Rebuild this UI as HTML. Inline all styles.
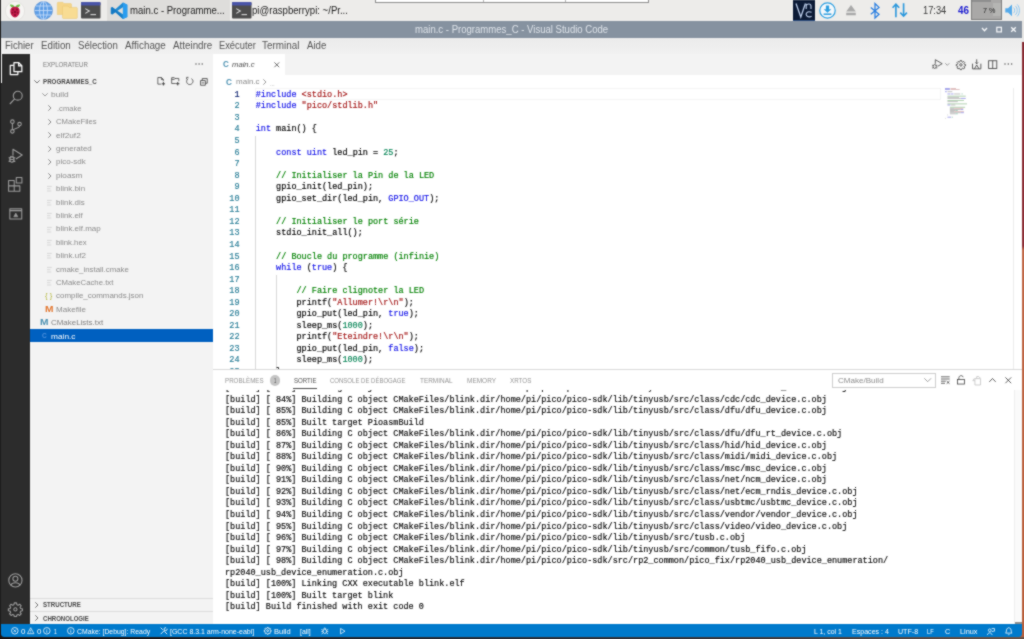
<!DOCTYPE html>
<html lang="fr">
<head>
<meta charset="utf-8">
<title>main.c - Programmes_C - Visual Studio Code</title>
<style>
*{box-sizing:border-box;margin:0;padding:0}
html,body{width:1024px;height:639px;overflow:hidden;background:#1a1210}
body{font-family:"Liberation Sans",sans-serif;position:relative}
#root{position:absolute;left:-4px;top:-4px;width:1032px;height:647px;overflow:hidden;will-change:transform;filter:url(#soft);
  background:linear-gradient(#7a2228 0,#8c3038 64px,#8e323a 250px,#c16a4a 254px,#b9603c 647px)}
#in{position:absolute;left:4px;top:4px;width:1024px;height:639px}
.a{position:absolute}
.l{position:absolute;white-space:pre;line-height:1;transform-origin:0 50%}
svg{position:absolute;overflow:visible}
.code{position:absolute;font-family:"Liberation Mono",monospace;white-space:pre;-webkit-text-stroke:0.16px}
.k{color:#1010e8}.s{color:#a31515}.c{color:#008000}.n{color:#098658}.p{color:#af00db}.m{color:#0000ff}.e{color:#ee0000}
</style>
</head>
<body>
<svg width="0" height="0" style="position:absolute"><filter id="soft" x="0" y="0" width="100%" height="100%" color-interpolation-filters="sRGB"><feConvolveMatrix order="3" kernelMatrix="1 2 1 2 12 2 1 2 1" divisor="24" edgeMode="duplicate" preserveAlpha="true"/></filter></svg>
<div id="root"><div id="in">
<div class="a" style="left:-4px;top:-4px;width:1032px;height:25.3px;background:#edecea"></div>
<div class="a" style="left:1021.8px;top:21px;width:6.2px;height:21px;background:#e9e8e6"></div>
<div class="a" style="left:-4px;top:0;width:5.2px;height:644px;background:#1c1c1c"></div>
<div class="a" style="left:-4px;top:-4px;width:5.1px;height:25px;background:#2a2a2a"></div>
<div class="a" style="left:375px;top:-6px;width:273.6px;height:8.6px;background:#fff;border:0.8px solid #8e8e8e"></div>
<div class="a" style="left:483.3px;top:-4px;width:0.7px;height:6.2px;background:#b5b5b5"></div>
<div class="a" style="left:564.8px;top:-4px;width:0.7px;height:6.2px;background:#b5b5b5"></div>
<div class="a" style="left:107px;top:-4px;width:122.5px;height:25.3px;background:#dedddb"></div>
<svg style="left:5px;top:0.5px" width="20" height="20" viewBox="0 0 20 20">
<circle cx="10" cy="10" r="9.6" fill="#f6f5f3" stroke="#dcdad7" stroke-width="0.6"/>
<path d="M10 6.2 C8.6 3.6 6.2 3.2 4.9 3.7 C5.2 5.6 7 6.9 10 6.2 Z" fill="#6cc04a"/>
<path d="M10 6.2 C11.4 3.6 13.8 3.2 15.1 3.7 C14.8 5.6 13 6.9 10 6.2 Z" fill="#6cc04a"/>
<path d="M10 5.9 C12.8 5.6 14.9 7.6 14.7 10.4 C14.6 13.4 12.4 16.2 10 16.4 C7.6 16.2 5.4 13.4 5.3 10.4 C5.1 7.6 7.2 5.6 10 5.9 Z" fill="#c51a4a"/>
<g fill="#8f0f33"><circle cx="8" cy="8.6" r="1.1"/><circle cx="12" cy="8.6" r="1.1"/><circle cx="10" cy="11" r="1.3"/><circle cx="7.2" cy="11.8" r="1"/><circle cx="12.8" cy="11.8" r="1"/><circle cx="10" cy="14.2" r="1.1"/></g>
</svg>
<svg style="left:33.7px;top:0.8px" width="19" height="19" viewBox="0 0 19 19">
<circle cx="9.5" cy="9.5" r="9" fill="#5f9fe6" stroke="#4d86cc" stroke-width="0.6"/>
<g fill="none" stroke="#c9defa" stroke-width="0.8"><ellipse cx="9.5" cy="9.5" rx="4" ry="9"/><path d="M9.5 0.5V18.5M0.6 9.5H18.4M1.8 5H17.2M1.8 14H17.2"/></g>
</svg>
<svg style="left:57px;top:2px" width="21" height="17" viewBox="0 0 21 17">
<path d="M0.3 1.2 Q0.3 0.3 1.2 0.3 H5.8 L7 1.6 H13.6 Q14.5 1.6 14.5 2.5 V12.5 H0.3 Z" fill="#f5d58a" stroke="#e9c670" stroke-width="0.5"/>
<path d="M5.5 5 Q5.5 4.1 6.4 4.1 H11 L12.2 5.4 H19.4 Q20.3 5.4 20.3 6.3 V15.6 Q20.3 16.5 19.4 16.5 H6.4 Q5.5 16.5 5.5 15.6 Z" fill="#f8dc93" stroke="#e8c56d" stroke-width="0.5"/>
</svg>
<svg style="left:81px;top:2.2px" width="19.5" height="16.6" viewBox="0 0 19.5 16.6">
<rect x="0" y="0" width="19.5" height="16.6" rx="1" fill="#4d4d4d"/>
<rect x="0" y="0" width="19.5" height="3.6" rx="1" fill="#4a55a8"/>
<path d="M4.3 6.6 L8.3 9 L4.3 11.4" fill="none" stroke="#d8d8d8" stroke-width="1.1"/>
<path d="M9.5 12.6 H15" stroke="#d8d8d8" stroke-width="1.1"/>
</svg>
<svg style="left:231.5px;top:2.2px" width="19.5" height="16.6" viewBox="0 0 19.5 16.6">
<rect x="0" y="0" width="19.5" height="16.6" rx="1" fill="#4d4d4d"/>
<rect x="0" y="0" width="19.5" height="3.6" rx="1" fill="#4a55a8"/>
<path d="M4.3 6.6 L8.3 9 L4.3 11.4" fill="none" stroke="#d8d8d8" stroke-width="1.1"/>
<path d="M9.5 12.6 H15" stroke="#d8d8d8" stroke-width="1.1"/>
</svg>
<svg style="left:110px;top:1.8px" width="18.5" height="17.5" viewBox="0 0 100 100">
<path d="M71 3 L96 15 V85 L71 97 L28 58 L10 72 L2 67 V33 L10 28 L28 42 Z M71 30 L40 50 L71 70 Z" fill="#1f8ad2"/>
<path d="M71 3 L96 15 V85 L71 97 Z" fill="#2a9df0"/>
<path d="M2 33 L10 28 L60 72 L71 97 L28 58 L10 72 L2 67 Z" fill="#0d6db8" opacity=".55"/>
</svg>
<svg style="left:793px;top:0" width="22" height="21.6" viewBox="0 0 22 21.6">
<rect width="22" height="21.6" fill="#0d1b36"/>
<rect y="20.4" width="22" height="1.2" fill="#3d6fb0"/>
<path d="M3 3.5 L7.8 17 L12.4 3.5" fill="none" stroke="#bccdea" stroke-width="1.25"/>
<path d="M13.2 9 V3.8 M13.2 5.6 C13.8 3.6 18 3.2 18 6 V9" fill="none" stroke="#bccdea" stroke-width="1.1"/>
<path d="M18.6 12.2 C14 10.6 12.2 13.6 13.6 15.6 C14.8 17.3 17.4 17 18.6 16.2" fill="none" stroke="#bccdea" stroke-width="1.1"/>
</svg>
<svg style="left:819px;top:1.5px" width="17" height="17" viewBox="0 0 17 17">
<circle cx="8.5" cy="8.5" r="7.7" fill="#f4f8fc" stroke="#2d9fe0" stroke-width="1.2"/>
<path d="M6.9 3.4 H10.1 V7.2 H12.3 L8.5 10.8 L4.7 7.2 H6.9 Z" fill="#2d9fe0"/>
<path d="M4.6 12.2 H12.4" stroke="#2d9fe0" stroke-width="1.5"/>
</svg>
<svg style="left:846px;top:5px" width="10" height="10.4" viewBox="0 0 10 10.4">
<path d="M5 0 L9.8 6.6 H0.2 Z M0.2 7.8 H9.8 V10.2 H0.2 Z" fill="#a9a9a9"/>
</svg>
<svg style="left:869.5px;top:2.6px" width="10" height="15.6" viewBox="0 0 10 15.6">
<path d="M0.8 4.4 L9 11.2 L5 15 V0.6 L9 4.4 L0.8 11.2" fill="none" stroke="#2b7fe0" stroke-width="1.3" stroke-linejoin="miter"/>
</svg>
<svg style="left:891.5px;top:3px" width="15.5" height="14.4" viewBox="0 0 15.5 14.4">
<path d="M3.9 14.2 V1.4 M0.6 4.8 L3.9 1.2 L7.2 4.8" fill="none" stroke="#2b98dc" stroke-width="1.6"/>
<path d="M11.6 0.2 V13 M8.3 9.6 L11.6 13.2 L14.9 9.6" fill="none" stroke="#2b98dc" stroke-width="1.6"/>
</svg>
<div class="a" style="left:971.2px;top:-4px;width:30.6px;height:23.6px;background:#a9a8a7;border:0.7px solid #7d7d7d;border-top:none"></div>
<div class="a" style="left:971.8px;top:-4px;width:19px;height:6px;background:#8f8f8f"></div>
<div class="a" style="left:993px;top:3px;width:8px;height:13px;background:#c0bfbd;opacity:.55"></div>
<svg style="left:1004.5px;top:3.6px" width="14.5" height="12.8" viewBox="0 0 14.5 12.8">
<path d="M0.3 4.3 H3 L7 0.6 V12.2 L3 8.5 H0.3 Z" fill="#55aaea"/>
<path d="M8.6 3.6 C10 5 10 7.8 8.6 9.2 M10.4 1.9 C12.8 4.2 12.8 8.6 10.4 10.9 M12.2 0.4 C15.2 3.4 15.2 9.4 12.2 12.4" fill="none" stroke="#8cc7f2" stroke-width="1"/>
</svg>
<div class="a" style="left:1.2px;top:21.3px;width:1020.6px;height:16.5px;background:#8692a0"></div>
<svg style="left:980px;top:25px" width="38" height="10" viewBox="0 0 38 10">
<path d="M2 3 L4.5 5.8 L7 3" fill="none" stroke="#f4f6f8" stroke-width="1.3"/>
<rect x="16.8" y="2.3" width="4.6" height="4.6" fill="none" stroke="#f4f6f8" stroke-width="1.2"/>
<path d="M31.2 2.2 L35.8 6.8 M35.8 2.2 L31.2 6.8" stroke="#f4f6f8" stroke-width="1.3"/>
</svg>
<div class="a" style="left:1.2px;top:37.8px;width:1020.6px;height:16px;background:linear-gradient(#ebebeb,#eeeeee 60%,#f1f1f1)"></div>
<div class="a" style="left:1.2px;top:53.8px;width:1020.6px;height:571px;background:#ffffff"></div>
<div class="a" style="left:1.2px;top:53.8px;width:29.2px;height:571px;background:#2c2c2c"></div>
<div class="a" style="left:1.2px;top:53.8px;width:1.3px;height:29.2px;background:#ffffff"></div>
<div class="a" style="left:30.4px;top:53.8px;width:182.8px;height:571px;background:#f3f3f3"></div>
<div class="a" style="left:213.2px;top:53.8px;width:808.6px;height:20.8px;background:#f3f3f3"></div>
<div class="a" style="left:213.4px;top:53.8px;width:71.4px;height:20.8px;background:#ffffff"></div>
<svg style="left:8.6px;top:60.6px" width="14" height="15" viewBox="0 0 24 24" fill="none" stroke="#ffffff" stroke-width="2.1" stroke-linejoin="round">
<path d="M8.5 6.5 V2 H16.8 L22 7.2 V17.5 H8.5 V6.5 M16.5 2.2 V7.5 H21.8"/>
<path d="M8.2 6.5 H2.2 V22.4 H15.2 V17.8"/></svg>
<svg style="left:9px;top:89.6px" width="14.4" height="14.8" viewBox="0 0 24 24" fill="none" stroke="#9a9a9a" stroke-width="1.9">
<circle cx="14.6" cy="9.2" r="7.4"/><path d="M9.4 14.6 L1.4 23"/></svg>
<svg style="left:8.8px;top:119.2px" width="13.6" height="15" viewBox="0 0 24 26" fill="none" stroke="#9a9a9a" stroke-width="1.9">
<circle cx="6" cy="4.4" r="3.1"/><circle cx="6" cy="21.6" r="3.1"/><circle cx="18.6" cy="8.8" r="3.1"/>
<path d="M6 7.6 V18.4 M18.6 12 C18.6 16 11 15.4 7 19"/></svg>
<svg style="left:8px;top:148.4px" width="15.4" height="15.4" viewBox="0 0 26 26" fill="none" stroke="#9a9a9a" stroke-width="1.9" stroke-linejoin="round">
<path d="M8.4 12.6 V2.2 L24 11.8 L13.4 18.6"/>
<ellipse cx="6.6" cy="19.4" rx="3.6" ry="4.4"/><path d="M1 16.4 H3.4 M9.8 16.4 H12.4 M1 22.6 H3.4 M9.8 22.6 H12.4 M3.4 19.4 H9.8 M4.4 13.6 L5.4 15.4 M8.8 13.6 L7.8 15.4"/></svg>
<svg style="left:8.4px;top:177.2px" width="14.8" height="14.8" viewBox="0 0 25 25" fill="none" stroke="#9a9a9a" stroke-width="1.8" stroke-linejoin="round">
<path d="M1 6 H10.5 V15 H1 Z M1 15 V24 H10.5 V15 M10.5 15 H20 V24 H10.5"/><rect x="14" y="1" width="9.5" height="9"/></svg>
<svg style="left:9px;top:208.4px" width="13.6" height="11.8" viewBox="0 0 24 21" fill="none" stroke="#9a9a9a" stroke-width="1.9" stroke-linejoin="round">
<rect x="1.4" y="1.4" width="21.2" height="18.2"/><path d="M1.4 4.6 H22.6" stroke-width="2.6"/><path d="M12 9 L15.6 15.6 H8.4 Z" fill="#9a9a9a" stroke-width="1.2"/></svg>
<svg style="left:8.4px;top:573.4px" width="14.8" height="14.8" viewBox="0 0 26 26" fill="none" stroke="#9a9a9a" stroke-width="1.9">
<circle cx="13" cy="13" r="11.6"/><circle cx="13" cy="10" r="4.4"/><path d="M5 21.4 C7 15.6 19 15.6 21 21.4"/></svg>
<svg style="left:8.4px;top:602px" width="14.8" height="14.8" viewBox="0 0 24 24" fill="none" stroke="#9a9a9a" stroke-width="1.8" stroke-linejoin="round">
<circle cx="12" cy="12" r="2.6"/>
<path d="M10.2 1.4 H13.8 L14.4 4.4 L16.4 5.3 L19 3.6 L21.4 6.1 L19.7 8.6 L20.5 10.6 L23.4 11.2 V14.2 L20.5 14.8 L19.7 16.8 L21.4 19.3 L19 21.8 L16.4 20.1 L14.4 21 L13.8 23.6 H10.2 L9.6 21 L7.6 20.1 L5 21.8 L2.6 19.3 L4.3 16.8 L3.5 14.8 L0.6 14.2 V11.2 L3.5 10.6 L4.3 8.6 L2.6 6.1 L5 3.6 L7.6 5.3 L9.6 4.4 Z"/></svg>
<svg style="left:194.8px;top:63.2px" width="9" height="2" viewBox="0 0 9 2"><g fill="#4a4a4a"><circle cx="1" cy="1" r=".68"/><circle cx="4.1" cy="1" r=".68"/><circle cx="7.2" cy="1" r=".68"/></g></svg>
<svg style="left:33.6px;top:79.8px" width="6" height="3.6" viewBox="0 0 6 3.6"><path d="M0.3 0.3 L3 3 L5.7 0.3" fill="none" stroke="#5e5e5e" stroke-width="0.85"/></svg>
<svg style="left:156.6px;top:77.2px" width="8.4" height="8.6" viewBox="0 0 16 16" fill="none" stroke="#3a3a3a" stroke-width="1.4">
<path d="M8 13.4 H1.6 V0.8 H8.6 L12 4.2 V8 M8.4 0.8 V4.6 H12"/><path d="M12.2 9.6 V16 M9 12.8 H15.4" stroke-width="1.8"/></svg>
<svg style="left:170.8px;top:77.4px" width="9.2" height="8.4" viewBox="0 0 17 16" fill="none" stroke="#3a3a3a" stroke-width="1.4">
<path d="M9 12.4 H1 V1.2 H6 L7.4 2.8 H14.6 V8 M1 4.6 H6 L7.4 2.8"/><path d="M12.6 9.6 V16 M9.4 12.8 H15.8" stroke-width="1.8"/></svg>
<svg style="left:186px;top:77.4px" width="7.6" height="8.2" viewBox="0 0 14 15" fill="none" stroke="#3a3a3a" stroke-width="1.4">
<path d="M10 3.2 C14 5.6 13.8 12 9 13.6 C3.4 15 -0.2 9.6 1.6 5.6 C2.2 4.4 3 3.6 4 3 M9.4 0.6 H12.8 V4.2" transform="translate(14,0) scale(-1,1)"/></svg>
<svg style="left:200px;top:77.6px" width="7.8" height="7.8" viewBox="0 0 14 14" fill="none" stroke="#3a3a3a" stroke-width="1.4">
<path d="M1 4.6 H9.6 V13 H1 Z M3 8.8 H7.6 M4 4.6 V1 H13 V9.4 H9.6"/></svg>
<svg style="left:41.8px;top:93.25999999999999px" width="6" height="3.6" viewBox="0 0 6 3.6"><path d="M0.3 0.3 L3 3 L5.7 0.3" fill="none" stroke="#8a8a8a" stroke-width="0.85"/></svg>
<svg style="left:47.8px;top:105.47px" width="3.6" height="6" viewBox="0 0 3.6 6"><path d="M0.3 0.3 L3 3 L0.3 5.7" fill="none" stroke="#7a7a7a" stroke-width="0.85"/></svg>
<svg style="left:47.8px;top:118.88px" width="3.6" height="6" viewBox="0 0 3.6 6"><path d="M0.3 0.3 L3 3 L0.3 5.7" fill="none" stroke="#7a7a7a" stroke-width="0.85"/></svg>
<svg style="left:47.8px;top:132.29px" width="3.6" height="6" viewBox="0 0 3.6 6"><path d="M0.3 0.3 L3 3 L0.3 5.7" fill="none" stroke="#7a7a7a" stroke-width="0.85"/></svg>
<svg style="left:47.8px;top:145.7px" width="3.6" height="6" viewBox="0 0 3.6 6"><path d="M0.3 0.3 L3 3 L0.3 5.7" fill="none" stroke="#7a7a7a" stroke-width="0.85"/></svg>
<svg style="left:47.8px;top:159.11px" width="3.6" height="6" viewBox="0 0 3.6 6"><path d="M0.3 0.3 L3 3 L0.3 5.7" fill="none" stroke="#7a7a7a" stroke-width="0.85"/></svg>
<svg style="left:47.8px;top:172.52px" width="3.6" height="6" viewBox="0 0 3.6 6"><path d="M0.3 0.3 L3 3 L0.3 5.7" fill="none" stroke="#7a7a7a" stroke-width="0.85"/></svg>
<svg style="left:47.2px;top:186.43px" width="5" height="5.4" viewBox="0 0 5 5.4"><path d="M0 0.4 H4.8 M0 2.7 H3.4 M0 5 H4.2" stroke="#cdcdcd" stroke-width="0.75"/></svg>
<svg style="left:47.2px;top:199.84px" width="5" height="5.4" viewBox="0 0 5 5.4"><path d="M0 0.4 H4.8 M0 2.7 H3.4 M0 5 H4.2" stroke="#cdcdcd" stroke-width="0.75"/></svg>
<svg style="left:47.2px;top:213.25px" width="5" height="5.4" viewBox="0 0 5 5.4"><path d="M0 0.4 H4.8 M0 2.7 H3.4 M0 5 H4.2" stroke="#cdcdcd" stroke-width="0.75"/></svg>
<svg style="left:47.2px;top:226.66px" width="5" height="5.4" viewBox="0 0 5 5.4"><path d="M0 0.4 H4.8 M0 2.7 H3.4 M0 5 H4.2" stroke="#cdcdcd" stroke-width="0.75"/></svg>
<svg style="left:47.2px;top:240.07px" width="5" height="5.4" viewBox="0 0 5 5.4"><path d="M0 0.4 H4.8 M0 2.7 H3.4 M0 5 H4.2" stroke="#cdcdcd" stroke-width="0.75"/></svg>
<svg style="left:47.2px;top:253.48px" width="5" height="5.4" viewBox="0 0 5 5.4"><path d="M0 0.4 H4.8 M0 2.7 H3.4 M0 5 H4.2" stroke="#cdcdcd" stroke-width="0.75"/></svg>
<svg style="left:47.2px;top:266.89px" width="5" height="5.4" viewBox="0 0 5 5.4"><path d="M0 0.4 H4.8 M0 2.7 H3.4 M0 5 H4.2" stroke="#cdcdcd" stroke-width="0.75"/></svg>
<svg style="left:47.2px;top:280.30px" width="5" height="5.4" viewBox="0 0 5 5.4"><path d="M0 0.4 H4.8 M0 2.7 H3.4 M0 5 H4.2" stroke="#cdcdcd" stroke-width="0.75"/></svg>
<div class="a" style="left:30.4px;top:329.3px;width:182.8px;height:12.9px;background:#0060c0"></div>
<div class="a" style="left:30.4px;top:597.8px;width:182.8px;height:0.7px;background:#dcdcdc"></div>
<div class="a" style="left:30.4px;top:611.2px;width:182.8px;height:0.7px;background:#dcdcdc"></div>
<svg style="left:34.8px;top:601.7px" width="3.6" height="6" viewBox="0 0 3.6 6"><path d="M0.3 0.3 L3 3 L0.3 5.7" fill="none" stroke="#5e5e5e" stroke-width="0.85"/></svg>
<svg style="left:34.8px;top:615.2px" width="3.6" height="6" viewBox="0 0 3.6 6"><path d="M0.3 0.3 L3 3 L0.3 5.7" fill="none" stroke="#5e5e5e" stroke-width="0.85"/></svg>
<svg style="left:273.8px;top:61.8px" width="5.6" height="5.6" viewBox="0 0 5.6 5.6"><path d="M0.4 0.4 L5.2 5.2 M5.2 0.4 L0.4 5.2" stroke="#4a4a4a" stroke-width="0.8"/></svg>
<svg style="left:262.6px;top:78.9px" width="3.6" height="6" viewBox="0 0 3.6 6"><path d="M0.3 0.3 L3 3 L0.3 5.7" fill="none" stroke="#8a8a8a" stroke-width="0.85"/></svg>
<svg style="left:931.6px;top:59.4px" width="11" height="10" viewBox="0 0 22 20" fill="none" stroke="#484848" stroke-width="1.7" stroke-linejoin="round">
<path d="M6.6 9.6 V1.4 L20.4 9.4 L11.4 14.6"/><ellipse cx="5.4" cy="15" rx="3.2" ry="3.8"/><path d="M0.4 12.6 H2.4 M8.4 12.6 H10.6 M0.4 17.8 H2.4 M8.4 17.8 H10.6"/></svg>
<svg style="left:945.2px;top:63.2px" width="4.6" height="2.8" viewBox="0 0 4.6 2.8"><path d="M0.3 0.3 L2.3 2.3 L4.3 0.3" fill="none" stroke="#7a7a7a" stroke-width="0.75"/></svg>
<svg style="left:955.8px;top:59.6px" width="9.8" height="9.8" viewBox="0 0 24 24" fill="none" stroke="#484848" stroke-width="2.1" stroke-linejoin="round">
<circle cx="12" cy="12" r="3"/>
<path d="M10.2 1.4 H13.8 L14.4 4.4 L16.4 5.3 L19 3.6 L21.4 6.1 L19.7 8.6 L20.5 10.6 L23.4 11.2 V14.2 L20.5 14.8 L19.7 16.8 L21.4 19.3 L19 21.8 L16.4 20.1 L14.4 21 L13.8 23.6 H10.2 L9.6 21 L7.6 20.1 L5 21.8 L2.6 19.3 L4.3 16.8 L3.5 14.8 L0.6 14.2 V11.2 L3.5 10.6 L4.3 8.6 L2.6 6.1 L5 3.6 L7.6 5.3 L9.6 4.4 Z"/></svg>
<svg style="left:971.8px;top:59px" width="9.4" height="10.4" viewBox="0 0 18 20" fill="none" stroke="#484848" stroke-width="1.7" stroke-linejoin="round">
<path d="M1 9 V19 H17 V9 M9 0.6 V9 M6.4 6.6 L9 9.4 L11.6 6.6 M4.6 19 L9 11.4 L13.4 19"/></svg>
<svg style="left:988.2px;top:59.8px" width="9.4" height="9.2" viewBox="0 0 18 18" fill="none" stroke="#484848" stroke-width="1.7">
<rect x="1" y="1.4" width="16" height="15.2"/><path d="M9 1.4 V16.6"/></svg>
<svg style="left:1004.2px;top:63.4px" width="9" height="2" viewBox="0 0 9 2"><g fill="#555"><circle cx="1" cy="1" r=".75"/><circle cx="4.3" cy="1" r=".75"/><circle cx="7.6" cy="1" r=".75"/></g></svg>
<div class="a" style="left:255.2px;top:88.1px;width:685.4px;height:11.7px;border:1px solid #f4f4f4"></div>
<div class="a" style="left:213.2px;top:74.6px;width:808.6px;height:295px;overflow:hidden">
<div class="a" style="left:41.8px;top:61.45px;width:0.6px;height:254.10px;background:#d8d8d8"></div>
<div class="a" style="left:62.8px;top:200.05px;width:0.6px;height:103.95px;background:#d8d8d8"></div>
<div class="code" style="left:0;top:15.25px;width:26.3px;text-align:right;font-size:8.51px;line-height:11.55px;color:#2b7f98"><span style="color:#0b216f">1</span>
2
3
4
5
6
7
8
9
10
11
12
13
14
15
16
17
18
19
20
21
22
23
24
25</div>
<div class="code" style="left:42.5px;top:15.25px;font-size:8.51px;line-height:11.55px;color:#000000"><span class="k">#include</span> <span class="s">&lt;stdio.h&gt;</span>
<span class="k">#include</span> <span class="s">"pico/stdlib.h"</span>

<span class="k">int</span> main() {

    <span class="k">const</span> <span class="k">uint</span> led_pin = <span class="n">25</span>;

    <span class="c">// Initialiser la Pin de la LED</span>
    gpio_init(led_pin);
    gpio_set_dir(led_pin, <span class="k">GPIO_OUT</span>);

    <span class="c">// Initialiser le port série</span>
    stdio_init_all();

    <span class="c">// Boucle du programme (infinie)</span>
    <span class="k">while</span> (<span class="k">true</span>) {

        <span class="c">// Faire clignoter la LED</span>
        printf(<span class="s">"Allumer!\r\n"</span>);
        gpio_put(led_pin, <span class="k">true</span>);
        sleep_ms(<span class="n">1000</span>);
        printf(<span class="s">"Eteindre!\r\n"</span>);
        gpio_put(led_pin, <span class="k">false</span>);
        sleep_ms(<span class="n">1000</span>);
    }</div>
</div>
<svg style="left:945.4px;top:88px" width="30" height="36" viewBox="0 0 30 36" opacity="0.62"><rect x="0.00" y="0.00" width="4.88" height="0.85" fill="#5a5ad8"/><rect x="5.49" y="0.00" width="5.49" height="0.85" fill="#c58a8a"/><rect x="0.00" y="1.10" width="4.88" height="0.85" fill="#5a5ad8"/><rect x="5.49" y="1.10" width="9.15" height="0.85" fill="#c58a8a"/><rect x="0.00" y="3.31" width="1.83" height="0.85" fill="#5a5ad8"/><rect x="2.44" y="3.31" width="4.88" height="0.85" fill="#8a8a8a"/><rect x="2.44" y="5.53" width="3.05" height="0.85" fill="#5a5ad8"/><rect x="6.10" y="5.53" width="2.44" height="0.85" fill="#5a5ad8"/><rect x="9.15" y="5.53" width="6.10" height="0.85" fill="#8a8a8a"/><rect x="16.47" y="5.53" width="1.22" height="0.85" fill="#5aa88a"/><rect x="2.44" y="7.73" width="18.30" height="0.85" fill="#6aa86a"/><rect x="2.44" y="8.84" width="11.59" height="0.85" fill="#8a8a8a"/><rect x="2.44" y="9.95" width="13.42" height="0.85" fill="#8a8a8a"/><rect x="15.86" y="9.95" width="4.88" height="0.85" fill="#5a5ad8"/><rect x="2.44" y="12.15" width="16.47" height="0.85" fill="#6aa86a"/><rect x="2.44" y="13.26" width="10.37" height="0.85" fill="#8a8a8a"/><rect x="2.44" y="15.47" width="19.52" height="0.85" fill="#6aa86a"/><rect x="2.44" y="16.57" width="3.05" height="0.85" fill="#5a5ad8"/><rect x="6.10" y="16.57" width="4.27" height="0.85" fill="#8a8a8a"/><rect x="4.88" y="18.79" width="15.25" height="0.85" fill="#6aa86a"/><rect x="4.88" y="19.89" width="4.27" height="0.85" fill="#8a8a8a"/><rect x="9.15" y="19.89" width="9.15" height="0.85" fill="#c58a8a"/><rect x="4.88" y="21.00" width="10.98" height="0.85" fill="#8a8a8a"/><rect x="15.86" y="21.00" width="2.44" height="0.85" fill="#5a5ad8"/><rect x="4.88" y="22.10" width="5.49" height="0.85" fill="#8a8a8a"/><rect x="10.37" y="22.10" width="2.44" height="0.85" fill="#5aa88a"/><rect x="4.88" y="23.20" width="4.27" height="0.85" fill="#8a8a8a"/><rect x="9.15" y="23.20" width="9.76" height="0.85" fill="#c58a8a"/><rect x="4.88" y="24.31" width="10.98" height="0.85" fill="#8a8a8a"/><rect x="15.86" y="24.31" width="3.05" height="0.85" fill="#5a5ad8"/><rect x="4.88" y="25.41" width="5.49" height="0.85" fill="#8a8a8a"/><rect x="10.37" y="25.41" width="2.44" height="0.85" fill="#5aa88a"/><rect x="2.44" y="26.52" width="0.61" height="0.85" fill="#8a8a8a"/><rect x="2.44" y="28.73" width="3.66" height="0.85" fill="#5a5ad8"/><rect x="6.71" y="28.73" width="1.22" height="0.85" fill="#5aa88a"/><rect x="0.00" y="29.84" width="0.61" height="0.85" fill="#8a8a8a"/></svg>
<div class="a" style="left:1013.3px;top:88.2px;width:0.6px;height:281px;background:#ececec"></div>
<div class="a" style="left:213.2px;top:369.4px;width:808.6px;height:0.8px;background:#d9d9d9"></div>
<div class="a" style="left:213.2px;top:370.2px;width:808.6px;height:254.6px;background:#ffffff"></div>
<div class="a" style="left:269.5px;top:375.3px;width:10.4px;height:10.4px;border-radius:50%;background:#c4c4c4"></div>
<div class="a" style="left:292.6px;top:387.8px;width:24.4px;height:0.8px;background:#505050"></div>
<div class="a" style="left:832.2px;top:373.2px;width:103.6px;height:14.5px;background:#fff;border:0.8px solid #cecece"></div>
<svg style="left:923.8px;top:378.4px" width="7.4" height="4.2" viewBox="0 0 7.4 4.2"><path d="M0.3 0.3 L3.7 3.7 L7.1 0.3" fill="none" stroke="#8a8a8a" stroke-width="0.8"/></svg>
<svg style="left:940.6px;top:376.2px" width="9" height="8" viewBox="0 0 18 16" fill="none" stroke="#444444" stroke-width="1.6">
<path d="M0 1.6 H17.4 M0 6 H17.4 M0 10.4 H9.6 M0 14.6 H8 M11.4 10.2 L17 15.4 M17 10.2 L11.4 15.4"/></svg>
<svg style="left:956.8px;top:375.2px" width="8" height="9.6" viewBox="0 0 16 19" fill="none" stroke="#444444" stroke-width="1.6">
<rect x="1" y="9" width="14" height="9"/><path d="M3.8 9 V5.4 C3.8 0 12.2 0 12.2 4.4"/></svg>
<svg style="left:972.4px;top:375.6px" width="9.4" height="9.4" viewBox="0 0 18 18" fill="none" stroke="#c4c4c4" stroke-width="1.6" stroke-linejoin="round">
<path d="M5.6 5 H16.4 V17.2 H5.6 Z M5.6 9 H1.6 L4.6 4.4 M9 5 V1 H13 L16 4"/></svg>
<svg style="left:989.2px;top:378px" width="7" height="4.2" viewBox="0 0 7 4.2"><path d="M0.3 3.9 L3.5 0.5 L6.7 3.9" fill="none" stroke="#444444" stroke-width="0.85"/></svg>
<svg style="left:1004.8px;top:377.2px" width="6.6" height="6.6" viewBox="0 0 6.6 6.6"><path d="M0.4 0.4 L6.2 6.2 M6.2 0.4 L0.4 6.2" stroke="#444444" stroke-width="0.85"/></svg>
<div class="a" style="left:213.2px;top:390.3px;width:801px;height:234.1px;overflow:hidden">
<div class="code" style="left:11.8px;top:-7.30px;font-size:8.51px;line-height:11.55px;color:#0c0c0c">[build] [ 84%] Building C object CMakeFiles/blink.dir/home/pi/pico/pico-sdk/lib/tinyusb/src/class/audio/audio_device.c.obj
[build] [ 84%] Building C object CMakeFiles/blink.dir/home/pi/pico/pico-sdk/lib/tinyusb/src/class/cdc/cdc_device.c.obj
[build] [ 85%] Building C object CMakeFiles/blink.dir/home/pi/pico/pico-sdk/lib/tinyusb/src/class/dfu/dfu_device.c.obj
[build] [ 85%] Built target PioasmBuild
[build] [ 86%] Building C object CMakeFiles/blink.dir/home/pi/pico/pico-sdk/lib/tinyusb/src/class/dfu/dfu_rt_device.c.obj
[build] [ 87%] Building C object CMakeFiles/blink.dir/home/pi/pico/pico-sdk/lib/tinyusb/src/class/hid/hid_device.c.obj
[build] [ 88%] Building C object CMakeFiles/blink.dir/home/pi/pico/pico-sdk/lib/tinyusb/src/class/midi/midi_device.c.obj
[build] [ 90%] Building C object CMakeFiles/blink.dir/home/pi/pico/pico-sdk/lib/tinyusb/src/class/msc/msc_device.c.obj
[build] [ 91%] Building C object CMakeFiles/blink.dir/home/pi/pico/pico-sdk/lib/tinyusb/src/class/net/ncm_device.c.obj
[build] [ 92%] Building C object CMakeFiles/blink.dir/home/pi/pico/pico-sdk/lib/tinyusb/src/class/net/ecm_rndis_device.c.obj
[build] [ 93%] Building C object CMakeFiles/blink.dir/home/pi/pico/pico-sdk/lib/tinyusb/src/class/usbtmc/usbtmc_device.c.obj
[build] [ 94%] Building C object CMakeFiles/blink.dir/home/pi/pico/pico-sdk/lib/tinyusb/src/class/vendor/vendor_device.c.obj
[build] [ 95%] Building C object CMakeFiles/blink.dir/home/pi/pico/pico-sdk/lib/tinyusb/src/class/video/video_device.c.obj
[build] [ 96%] Building C object CMakeFiles/blink.dir/home/pi/pico/pico-sdk/lib/tinyusb/src/tusb.c.obj
[build] [ 97%] Building C object CMakeFiles/blink.dir/home/pi/pico/pico-sdk/lib/tinyusb/src/common/tusb_fifo.c.obj
[build] [ 98%] Building C object CMakeFiles/blink.dir/home/pi/pico/pico-sdk/src/rp2_common/pico_fix/rp2040_usb_device_enumeration/
rp2040_usb_device_enumeration.c.obj
[build] [100%] Linking CXX executable blink.elf
[build] [100%] Built target blink
[build] Build finished with exit code 0</div>
</div>
<div class="a" style="left:1014.2px;top:390.3px;width:7.6px;height:234px;background:#fafafa;border-left:0.6px solid #eeeeee"></div>
<div class="a" style="left:1014.6px;top:622.2px;width:7.2px;height:1.6px;background:#8f8f8f"></div>
<div class="a" style="left:-4px;top:630px;width:12px;height:13px;background:#1c1412"></div>
<div class="a" style="left:1.2px;top:624.4px;width:1020.6px;height:13px;background:#007acc;border-radius:0 0 3.5px 3.5px"></div>
<div class="a" style="left:-4px;top:637.4px;width:1032px;height:5.6px;background:linear-gradient(90deg,#1c1412,#27303c 45%,#3a3a40 70%,#6e564a)"></div>
<svg style="left:10.8px;top:627.4px" width="7.6" height="7.6" viewBox="0 0 16 16" fill="none" stroke="#ffffff" stroke-width="1.6"><circle cx="8" cy="8" r="6.9"/><path d="M5.3 5.3 L10.7 10.7 M10.7 5.3 L5.3 10.7" stroke-width="1.5"/></svg>
<svg style="left:27.4px;top:627.4px" width="7.4" height="7.4" viewBox="0 0 16 16" fill="none" stroke="#ffffff" stroke-width="1.5" stroke-linejoin="round"><path d="M8 1.6 L15 14.4 H1 Z M8 6 V10 M8 11.4 V12.8"/></svg>
<svg style="left:43.4px;top:627.4px" width="7.6" height="7.6" viewBox="0 0 16 16" fill="none" stroke="#ffffff" stroke-width="1.6"><circle cx="8" cy="8" r="6.9"/><path d="M8 7 V11.8 M8 4 V5.4" stroke-width="1.7"/></svg>
<svg style="left:67.4px;top:627.4px" width="7.6" height="7.6" viewBox="0 0 16 16" fill="none" stroke="#ffffff" stroke-width="1.6"><circle cx="8" cy="8" r="6.9"/><path d="M8 7 V11.8 M8 4 V5.4" stroke-width="1.7"/></svg>
<svg style="left:160px;top:627.2px" width="7.8" height="7.8" viewBox="0 0 16 16" fill="none" stroke="#ffffff" stroke-width="1.8" stroke-linecap="round">
<path d="M2 14 L9 7 M11.6 1.4 C8.6 1 7.4 4 8.8 6 M14.6 4.4 C15 7.4 12 8.6 10 7.2 M2 2 L5 5 M9.6 9.6 L14 14"/></svg>
<svg style="left:264.2px;top:627.4px" width="7.4" height="7.4" viewBox="0 0 24 24" fill="none" stroke="#ffffff" stroke-width="2.6" stroke-linejoin="round">
<circle cx="12" cy="12" r="3"/>
<path d="M10.2 1.4 H13.8 L14.4 4.4 L16.4 5.3 L19 3.6 L21.4 6.1 L19.7 8.6 L20.5 10.6 L23.4 11.2 V14.2 L20.5 14.8 L19.7 16.8 L21.4 19.3 L19 21.8 L16.4 20.1 L14.4 21 L13.8 23.6 H10.2 L9.6 21 L7.6 20.1 L5 21.8 L2.6 19.3 L4.3 16.8 L3.5 14.8 L0.6 14.2 V11.2 L3.5 10.6 L4.3 8.6 L2.6 6.1 L5 3.6 L7.6 5.3 L9.6 4.4 Z"/></svg>
<svg style="left:320.6px;top:627.2px" width="7.6" height="7.8" viewBox="0 0 16 16" fill="none" stroke="#ffffff" stroke-width="1.5">
<ellipse cx="8" cy="9" rx="3.6" ry="4.6"/><path d="M0.8 5 L4.6 6.8 M15.2 5 L11.4 6.8 M0.6 9.4 H4.4 M11.6 9.4 H15.4 M1.2 14.4 L4.8 12 M14.8 14.4 L11.2 12 M5.6 4.6 C5.6 1 10.4 1 10.4 4.6"/></svg>
<svg style="left:339.6px;top:628px" width="5.6" height="6.4" viewBox="0 0 11 13"><path d="M1 1 L10 6.5 L1 12 Z" fill="none" stroke="#ffffff" stroke-width="1.5" stroke-linejoin="round"/></svg>
<svg style="left:986.8px;top:627.6px" width="7.8" height="7.4" viewBox="0 0 16 15" fill="none" stroke="#ffffff" stroke-width="1.5" stroke-linejoin="round">
<circle cx="5.6" cy="4.6" r="2.8"/><path d="M0.8 14.4 C1.4 8.4 9.8 8.4 10.4 14.4 M9.6 1 H15.4 V6.4 H12.6 L11 8 V6.4 H9.6"/></svg>
<svg style="left:1004.8px;top:627.2px" width="7.6" height="8.2" viewBox="0 0 15 16" fill="none" stroke="#ffffff" stroke-width="1.5" stroke-linejoin="round">
<path d="M1.2 12 C3.4 10 2.2 6 3.8 3.6 C5.8 0.6 9.2 0.6 11.2 3.6 C12.8 6 11.6 10 13.8 12 Z M6 14.4 C6.8 15.6 8.2 15.6 9 14.4"/></svg>
<!-- labels -->
<span class="l" style="left:129.60px;top:4.68px;font-size:10.6px;color:#1e1e1e;transform:scaleX(0.9043);">main.c - Programme...</span>
<span class="l" style="left:252.30px;top:4.68px;font-size:10.6px;color:#1e1e1e;transform:scaleX(0.9066);">pi@raspberrypi: ~/Pr...</span>
<span class="l" style="left:922.80px;top:6.12px;font-size:10.2px;color:#3a3a3a;transform:scaleX(0.9115);">17:34</span>
<span class="l" style="left:958.20px;top:6.32px;font-size:10.2px;color:#1b1bd0;font-weight:700;transform:scaleX(0.9689);">46</span>
<span class="l" style="left:983.40px;top:7.49px;font-size:7.4px;color:#202020;transform:scaleX(0.9706);">7 %</span>
<span class="l" style="left:415.40px;top:24.83px;font-size:10.0px;color:#dde2e8;transform:scaleX(0.9557);">main.c - Programmes_C - Visual Studio Code</span>
<span class="l" style="left:5.20px;top:40.83px;font-size:10.0px;color:#555555;transform:scaleX(0.9515);">Fichier</span>
<span class="l" style="left:41.00px;top:40.83px;font-size:10.0px;color:#555555;transform:scaleX(0.9739);">Edition</span>
<span class="l" style="left:78.00px;top:40.83px;font-size:10.0px;color:#555555;transform:scaleX(0.9668);">Sélection</span>
<span class="l" style="left:125.00px;top:40.83px;font-size:10.0px;color:#555555;transform:scaleX(0.9824);">Affichage</span>
<span class="l" style="left:172.50px;top:40.83px;font-size:10.0px;color:#555555;transform:scaleX(0.9814);">Atteindre</span>
<span class="l" style="left:218.60px;top:40.83px;font-size:10.0px;color:#555555;transform:scaleX(0.9310);">Exécuter</span>
<span class="l" style="left:262.40px;top:40.83px;font-size:10.0px;color:#555555;transform:scaleX(0.9893);">Terminal</span>
<span class="l" style="left:307.00px;top:40.83px;font-size:10.0px;color:#555555;transform:scaleX(0.9680);">Aide</span>
<span class="l" style="left:42.60px;top:62.23px;font-size:6.7px;color:#7a7a7a;transform:scaleX(0.9103);">EXPLORATEUR</span>
<span class="l" style="left:42.80px;top:79.18px;font-size:6.8px;color:#484848;font-weight:700;transform:scaleX(0.9113);">PROGRAMMES_C</span>
<span class="l" style="left:51.00px;top:91.33px;font-size:7.9px;color:#8b8b8b;transform:scaleX(1.0599);">build</span>
<span class="l" style="left:56.90px;top:104.74px;font-size:7.9px;color:#8b8b8b;transform:scaleX(0.9675);">.cmake</span>
<span class="l" style="left:55.90px;top:118.15px;font-size:7.9px;color:#8b8b8b;transform:scaleX(0.9775);">CMakeFiles</span>
<span class="l" style="left:55.90px;top:131.56px;font-size:7.9px;color:#8b8b8b;transform:scaleX(1.0446);">elf2uf2</span>
<span class="l" style="left:55.90px;top:144.97px;font-size:7.9px;color:#8b8b8b;transform:scaleX(1.0053);">generated</span>
<span class="l" style="left:55.90px;top:158.38px;font-size:7.9px;color:#8b8b8b;transform:scaleX(1.0119);">pico-sdk</span>
<span class="l" style="left:55.90px;top:171.79px;font-size:7.9px;color:#8b8b8b;transform:scaleX(1.0361);">pioasm</span>
<span class="l" style="left:55.90px;top:185.20px;font-size:7.9px;color:#8b8b8b;transform:scaleX(1.0028);">blink.bin</span>
<span class="l" style="left:55.90px;top:198.61px;font-size:7.9px;color:#8b8b8b;transform:scaleX(1.0078);">blink.dis</span>
<span class="l" style="left:55.90px;top:212.02px;font-size:7.9px;color:#8b8b8b;transform:scaleX(1.0025);">blink.elf</span>
<span class="l" style="left:55.90px;top:225.43px;font-size:7.9px;color:#8b8b8b;transform:scaleX(1.0100);">blink.elf.map</span>
<span class="l" style="left:55.90px;top:238.84px;font-size:7.9px;color:#8b8b8b;transform:scaleX(0.9828);">blink.hex</span>
<span class="l" style="left:55.90px;top:252.25px;font-size:7.9px;color:#8b8b8b;transform:scaleX(1.0188);">blink.uf2</span>
<span class="l" style="left:55.90px;top:265.66px;font-size:7.9px;color:#8b8b8b;transform:scaleX(0.9942);">cmake_install.cmake</span>
<span class="l" style="left:55.90px;top:279.07px;font-size:7.9px;color:#8b8b8b;transform:scaleX(0.9827);">CMakeCache.txt</span>
<span class="l" style="left:45.20px;top:291.87px;font-size:7.4px;color:#b4b73c;transform:scaleX(1.0300);">{ }</span>
<span class="l" style="left:55.90px;top:292.48px;font-size:7.9px;color:#8b8b8b;transform:scaleX(1.0068);">compile_commands.json</span>
<span class="l" style="left:44.60px;top:305.02px;font-size:8.6px;color:#e37933;font-weight:700;transform:scaleX(1.1876);">M</span>
<span class="l" style="left:55.90px;top:305.89px;font-size:7.9px;color:#8b8b8b;transform:scaleX(1.0188);">Makefile</span>
<span class="l" style="left:39.90px;top:318.43px;font-size:8.6px;color:#4f93b3;font-weight:700;transform:scaleX(1.1876);">M</span>
<span class="l" style="left:50.80px;top:319.30px;font-size:7.9px;color:#808080;transform:scaleX(1.0075);">CMakeLists.txt</span>
<span class="l" style="left:41.60px;top:332.43px;font-size:7.4px;color:#4b8fdc;font-weight:700;transform:scaleX(0.8839);">C</span>
<span class="l" style="left:50.80px;top:332.71px;font-size:7.9px;color:#ffffff;transform:scaleX(1.0523);">main.c</span>
<span class="l" style="left:42.70px;top:602.28px;font-size:6.8px;color:#484848;font-weight:700;transform:scaleX(0.9014);">STRUCTURE</span>
<span class="l" style="left:42.70px;top:615.88px;font-size:6.8px;color:#484848;font-weight:700;transform:scaleX(0.8915);">CHRONOLOGIE</span>
<span class="l" style="left:222.50px;top:60.20px;font-size:8.4px;color:#4f93b3;font-weight:700;transform:scaleX(0.9647);">C</span>
<span class="l" style="left:232.20px;top:60.87px;font-size:7.9px;color:#4e4e4e;font-style:italic;transform:scaleX(0.9727);">main.c</span>
<span class="l" style="left:225.70px;top:77.60px;font-size:8.4px;color:#4f93b3;font-weight:700;transform:scaleX(0.9832);">C</span>
<span class="l" style="left:236.00px;top:77.97px;font-size:7.9px;color:#8a8a8a;transform:scaleX(1.0169);">main.c</span>
<span class="l" style="left:269.80px;top:80.16px;font-size:7.4px;color:#a5a5a5;transform:scaleX(0.6472);">…</span>
<span class="l" style="left:225.00px;top:378.18px;font-size:6.6px;color:#939393;transform:scaleX(0.9403);">PROBLÈMES</span>
<span class="l" style="left:273.80px;top:378.27px;font-size:6.4px;color:#4e4e4e;transform:scaleX(0.6556);">1</span>
<span class="l" style="left:293.50px;top:378.18px;font-size:6.6px;color:#505050;transform:scaleX(0.9243);">SORTIE</span>
<span class="l" style="left:330.40px;top:378.18px;font-size:6.6px;color:#939393;transform:scaleX(0.9115);">CONSOLE DE DÉBOGAGE</span>
<span class="l" style="left:419.80px;top:378.18px;font-size:6.6px;color:#939393;transform:scaleX(0.9751);">TERMINAL</span>
<span class="l" style="left:466.60px;top:378.18px;font-size:6.6px;color:#939393;transform:scaleX(0.9816);">MEMORY</span>
<span class="l" style="left:509.50px;top:378.18px;font-size:6.6px;color:#939393;transform:scaleX(0.9473);">XRTOS</span>
<span class="l" style="left:838.00px;top:376.94px;font-size:7.6px;color:#8c8c8c;transform:scaleX(1.0600);">CMake/Build</span>
<span class="l" style="left:21.20px;top:628.49px;font-size:7.4px;color:#ffffff;transform:scaleX(1.0756);">0</span>
<span class="l" style="left:37.20px;top:628.49px;font-size:7.4px;color:#ffffff;transform:scaleX(1.0756);">0</span>
<span class="l" style="left:53.60px;top:628.49px;font-size:7.4px;color:#ffffff;transform:scaleX(0.6793);">1</span>
<span class="l" style="left:77.40px;top:627.84px;font-size:7.6px;color:#ffffff;transform:scaleX(0.9025);">CMake: [Debug]: Ready</span>
<span class="l" style="left:170.20px;top:627.84px;font-size:7.6px;color:#ffffff;transform:scaleX(0.9188);">[GCC 8.3.1 arm-none-eabi]</span>
<span class="l" style="left:273.60px;top:627.84px;font-size:7.6px;color:#ffffff;transform:scaleX(0.9888);">Build</span>
<span class="l" style="left:300.20px;top:627.84px;font-size:7.6px;color:#ffffff;transform:scaleX(0.9091);">[all]</span>
<span class="l" style="left:814.40px;top:627.84px;font-size:7.6px;color:#ffffff;transform:scaleX(0.9119);">L 1, col 1</span>
<span class="l" style="left:851.80px;top:627.84px;font-size:7.6px;color:#ffffff;transform:scaleX(0.9314);">Espaces : 4</span>
<span class="l" style="left:898.00px;top:628.39px;font-size:7.6px;color:#ffffff;transform:scaleX(0.9327);">UTF-8</span>
<span class="l" style="left:927.20px;top:628.39px;font-size:7.6px;color:#ffffff;transform:scaleX(0.7500);">LF</span>
<span class="l" style="left:944.80px;top:628.39px;font-size:7.6px;color:#ffffff;transform:scaleX(0.9433);">C</span>
<span class="l" style="left:959.50px;top:627.84px;font-size:7.6px;color:#ffffff;transform:scaleX(0.9574);">Linux</span>
</div></div>
</body>
</html>
